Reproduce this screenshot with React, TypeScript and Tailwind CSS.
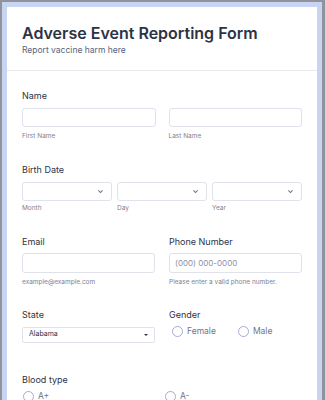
import React from 'react'

const Chevron = () => (
    <svg width="7" height="7" viewBox="0 0 10 10" fill="none" stroke="#6f7689" strokeWidth="1.6">
        <path d="M2 3.5 L5 6.5 L8 3.5" />
    </svg>
)

const Radio = ({ label }: { label: string }) => (
    <div className="flex items-center gap-[4px]">
        <span className="w-[11px] h-[11px] rounded-full border border-[#a3acd6] bg-white" />
        <span className="text-[8.5px] leading-[11px] text-[#6f7689]">{label}</span>
    </div>
)

const Label = ({ children }: { children: React.ReactNode }) => (
    <p className="text-[9px] leading-[11px] text-[#2c3345]">{children}</p>
)

const Sub = ({ children, className = 'mt-[5.5px]' }: { children: React.ReactNode; className?: string }) => (
    <p className={`text-[6.5px] leading-[9px] text-[#7d8193] ${className}`}>{children}</p>
)

export default function App() {
    return (
        <div
            className="w-[325px] h-[400px] overflow-hidden bg-[#8f949c] pl-[2px] pr-[3px] pt-[2px]"
            style={{ fontFamily: 'Inter, "Noto Sans", sans-serif' }}
        >
            <div className="h-full bg-[#c9d3f2] px-[5px] pt-[5px]">
                <div className="h-full bg-white overflow-hidden">
                    {/* En-tête */}
                    <div className="px-[15px] pt-[15px] pb-[14px] border-b border-[#e6e8ee]">
                        <h1 className="text-[16px] font-semibold text-[#2c3345] leading-[22px]">
                            Adverse Event Reporting Form
                        </h1>
                        <p className="text-[8.5px] leading-[11px] text-[#57647e] mt-[1px]">Report vaccine harm here</p>
                    </div>

                    <div className="px-[15px] pt-[19px]">
                        {/* Name */}
                        <Label>Name</Label>
                        <div className="grid grid-cols-2 gap-[13px] mt-[6.5px]">
                            <div>
                                <div className="h-[19px] border border-[#dfe2ea] rounded-[3px]" />
                                <Sub>First Name</Sub>
                            </div>
                            <div>
                                <div className="h-[19px] border border-[#dfe2ea] rounded-[3px]" />
                                <Sub>Last Name</Sub>
                            </div>
                        </div>

                        {/* Birth Date */}
                        <div className="mt-[23px]">
                            <Label>Birth Date</Label>
                            <div className="grid grid-cols-3 gap-[5px] mt-[6.5px]">
                                {['Month', 'Day', 'Year'].map((s) => (
                                    <div key={s}>
                                        <div className="h-[19px] border border-[#dfe2ea] rounded-[3px] flex items-center justify-end pr-[7px]">
                                            <Chevron />
                                        </div>
                                        <Sub className="mt-[3.5px]">{s}</Sub>
                                    </div>
                                ))}
                            </div>
                        </div>

                        {/* Email / Phone */}
                        <div className="mt-[23px] grid grid-cols-2 gap-[14px]">
                            <div>
                                <Label>Email</Label>
                                <div className="mt-[5.5px] h-[20px] border border-[#dfe2ea] rounded-[3px]" />
                                <Sub>example@example.com</Sub>
                            </div>
                            <div>
                                <Label>Phone Number</Label>
                                <div className="mt-[5.5px] h-[20px] border border-[#dfe2ea] rounded-[3px] flex items-center px-[5px] text-[8px] text-[#8d8fa8]">
                                    (000) 000-0000
                                </div>
                                <Sub>Please enter a valid phone number.</Sub>
                            </div>
                        </div>

                        {/* State / Gender */}
                        <div className="mt-[22px] grid grid-cols-2 gap-[14px]">
                            <div>
                                <Label>State</Label>
                                <div className="mt-[6.5px] h-[16px] border border-[#dfe2ea] rounded-[2px] flex items-center justify-between px-[6px]">
                                    <span className="text-[7px] text-[#2c3345]">Alabama</span>
                                    <span className="w-0 h-0 border-l-[2px] border-r-[2px] border-t-[2.5px] border-l-transparent border-r-transparent border-t-[#2c3345]" />
                                </div>
                            </div>
                            <div>
                                <Label>Gender</Label>
                                <div className="flex gap-[22px] pl-[3px] mt-[5.5px]">
                                    <Radio label="Female" />
                                    <Radio label="Male" />
                                </div>
                            </div>
                        </div>

                        {/* Blood type */}
                        <div className="mt-[31px]">
                            <Label>Blood type</Label>
                            <div className="flex mt-[6px] pl-[1px]">
                                <div className="w-[142px]">
                                    <Radio label="A+" />
                                </div>
                                <Radio label="A-" />
                            </div>
                        </div>
                    </div>
                </div>
            </div>
        </div>
    )
}
